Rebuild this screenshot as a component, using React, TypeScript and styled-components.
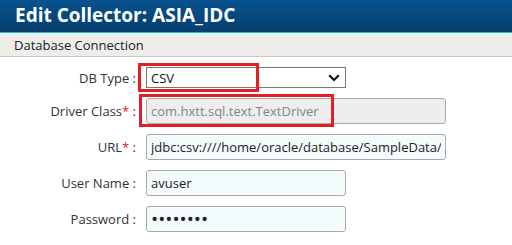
import React from "react";
import styled, { createGlobalStyle } from "styled-components";

const Global = createGlobalStyle`
  html, body { margin: 0; padding: 0; background: #fff; }
  body { font-family: "Open Sans", "Liberation Sans", sans-serif; }
  * { box-sizing: border-box; }
`;

const Page = styled.div`
  width: 512px;
  height: 245px;
  overflow: hidden;
  background: #fff;
`;

const TitleBar = styled.div`
  height: 33px;
  background: linear-gradient(#07528f, #053f6e);
  border-bottom: 1px solid #22bcd8;
  display: flex;
  align-items: center;
  padding-left: 15px;
`;

const Title = styled.h1`
  margin: 0;
  color: #fff;
  font-size: 19px;
  font-weight: 700;
  line-height: 1;
  padding-bottom: 1px;
`;

const SectionBar = styled.div`
  height: 24px;
  background: #eeede9;
  border-bottom: 1px solid #c9c9c9;
  display: flex;
  align-items: center;
  padding-left: 14px;
  font-size: 13px;
  color: #222;
`;

const Form = styled.div`
  position: relative;
  padding-top: 10px;
  display: grid;
  grid-template-columns: 136px auto;
  column-gap: 10px;
  row-gap: 10px;
  justify-content: start;
  align-items: center;
`;

const Label = styled.label`
  text-align: right;
  font-size: 13px;
  color: #333;
  white-space: nowrap;
`;

const Req = styled.span`
  color: #e0141e;
`;

const SelectWrap = styled.div`
  position: relative;
  width: 200px;
  height: 21px;
  border: 1px solid #777;
  background: #fff;
  display: flex;
  align-items: center;
  padding-left: 4px;
  font-size: 13px;
  color: #111;
`;

const Chevron = styled.svg`
  position: absolute;
  right: 5px;
  top: 6px;
`;

const TextInput = styled.input<{ $w: number; $disabled?: boolean; $big?: boolean }>`
  width: ${(p) => p.$w}px;
  height: 26px;
  border: 1px solid #a9a9a9;
  border-radius: 3px;
  background: ${(p) => (p.$disabled ? "#eeeeee" : "#f4fbfd")};
  color: ${(p) => (p.$disabled ? "#858585" : "#222")};
  font-family: "Open Sans", "Liberation Sans", sans-serif;
  font-size: ${(p) => (p.$big ? "19px" : "13px")};
  padding: 0 4px;
  outline: none;
  margin: 0;
`;

const Highlight = styled.div<{ $l: number; $t: number; $w: number; $h: number }>`
  position: absolute;
  left: ${(p) => p.$l}px;
  top: ${(p) => p.$t}px;
  width: ${(p) => p.$w}px;
  height: ${(p) => p.$h}px;
  border: 3px solid #e51e25;
  pointer-events: none;
`;

export default function App() {
  return (
    <Page>
      <Global />
      <TitleBar>
        <Title>Edit Collector: ASIA_IDC</Title>
      </TitleBar>
      <SectionBar>Database Connection</SectionBar>
      <Form>
        <Label>DB Type :</Label>
        <SelectWrap>
          CSV
          <Chevron width="12" height="8" viewBox="0 0 12 8">
            <path d="M1.2 1.2 L6 6 L10.8 1.2" fill="none" stroke="#111" strokeWidth="2.2" />
          </Chevron>
        </SelectWrap>

        <Label>
          Driver Class<Req>*</Req> :
        </Label>
        <TextInput $w={300} $disabled readOnly value="com.hxtt.sql.text.TextDriver" />

        <Label>
          URL<Req>*</Req> :
        </Label>
        <TextInput $w={300} readOnly value="jdbc:csv:////home/oracle/database/SampleData/" />

        <Label>User Name :</Label>
        <TextInput $w={200} readOnly value="avuser" />

        <Label>Password :</Label>
        <TextInput $w={200} $big type="password" readOnly value="password" />

        <Highlight $l={138} $t={6} $w={121} $h={29} />
        <Highlight $l={139} $t={37} $w={195} $h={33} />
      </Form>
    </Page>
  );
}
